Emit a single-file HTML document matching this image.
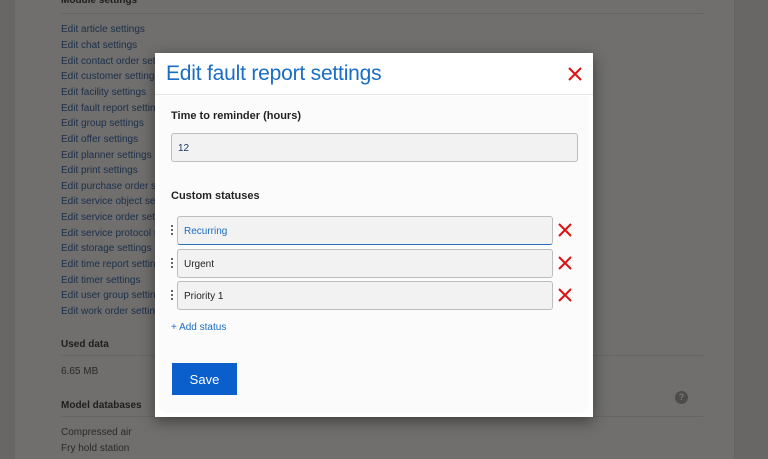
<!DOCTYPE html>
<html><head><style>
*{margin:0;padding:0;box-sizing:border-box}
body{width:768px;height:459px;overflow:hidden;background:#686766;font-family:"Liberation Sans",sans-serif;position:relative}
.panel{position:absolute;left:14px;top:0;width:721px;height:459px;background:#706f6d;border-left:1px solid #666;border-right:1px solid #636262}
.t{position:absolute;font-size:10px;color:#1b2f4a;white-space:nowrap}
.h{position:absolute;font-size:10px;font-weight:bold;color:#1e1e1e;white-space:nowrap}
.d{position:absolute;font-size:10px;color:#2a2a2a;white-space:nowrap}
.ln{position:absolute;left:61px;width:642px;height:1px;background:#666564}
.modal{position:absolute;left:155px;top:53px;width:438px;height:364px;background:#fff;box-shadow:0 4px 14px rgba(0,0,0,.45)}
.mh{height:42px;border-bottom:1px solid #e6e6e6;position:relative}
.mh h1{position:absolute;left:11px;top:9px;font-weight:normal;font-size:21px;color:#1a6dc4;letter-spacing:-0.2px}
.mb{position:absolute;left:4px;top:43px;width:430px;height:317px;background:#fbfbfb;border-radius:0 0 8px 8px}
.lbl{position:absolute;font-size:11px;font-weight:bold;color:#222}
.inp{position:absolute;background:#f2f2f2;border:1px solid #bdbdbd;border-radius:3px;font-size:10px;color:#222;padding-left:6px;padding-top:2px;display:flex;align-items:center}
.x{position:absolute;width:16px;height:16px}
.dots{position:absolute;left:171px;width:3px;font-size:0}
.dots i{display:block;width:2px;height:2px;background:#333;margin-bottom:2px;border-radius:1px}
</style></head><body>
<div class="panel"></div>
<div class="h" style="left:61px;top:-5px">Module settings</div>
<div class="ln" style="top:13px"></div>
<div class="t" style="left:61px;top:24px">Edit article settings</div>
<div class="t" style="left:61px;top:40px">Edit chat settings</div>
<div class="t" style="left:61px;top:56px">Edit contact order settings</div>
<div class="t" style="left:61px;top:71px">Edit customer settings</div>
<div class="t" style="left:61px;top:87px">Edit facility settings</div>
<div class="t" style="left:61px;top:103px">Edit fault report settings</div>
<div class="t" style="left:61px;top:118px">Edit group settings</div>
<div class="t" style="left:61px;top:134px">Edit offer settings</div>
<div class="t" style="left:61px;top:150px">Edit planner settings</div>
<div class="t" style="left:61px;top:165px">Edit print settings</div>
<div class="t" style="left:61px;top:181px">Edit purchase order settings</div>
<div class="t" style="left:61px;top:196px">Edit service object settings</div>
<div class="t" style="left:61px;top:212px">Edit service order settings</div>
<div class="t" style="left:61px;top:228px">Edit service protocol settings</div>
<div class="t" style="left:61px;top:243px">Edit storage settings</div>
<div class="t" style="left:61px;top:259px">Edit time report settings</div>
<div class="t" style="left:61px;top:275px">Edit timer settings</div>
<div class="t" style="left:61px;top:290px">Edit user group settings</div>
<div class="t" style="left:61px;top:306px">Edit work order settings</div>
<div class="h" style="left:61px;top:339px">Used data</div>
<div class="ln" style="top:355px"></div>
<div class="d" style="left:61px;top:366px">6.65 MB</div>
<div class="h" style="left:61px;top:400px">Model databases</div>
<div class="ln" style="top:416px"></div>
<div class="d" style="left:61px;top:427px">Compressed air</div>
<div class="d" style="left:61px;top:443px">Fry hold station</div>
<div style="position:absolute;left:675px;top:391px;width:13px;height:13px;border-radius:50%;background:#4d4c4b;color:#777;font-size:9px;font-weight:bold;text-align:center;line-height:13px">?</div>

<div class="modal">
<div class="mh"><h1>Edit fault report settings</h1>
<svg class="x" style="left:412px;top:13px" viewBox="0 0 16 16"><path d="M2 2L14 14M14 2L2 14" stroke="#e01010" stroke-width="2"/></svg></div>
<div class="mb"></div>
</div>
<div class="lbl" style="left:171px;top:110px">Time to reminder (hours)</div>
<div class="inp" style="left:171px;top:133px;width:407px;height:29px;color:#1b3a66">12</div>
<div class="lbl" style="left:171px;top:190px">Custom statuses</div>
<div class="dots" style="top:225px"><i></i><i></i><i></i></div>
<div class="inp" style="left:177px;top:216px;width:376px;height:29px;color:#1a6dc4;border-bottom:1px solid #2a6fb8">Recurring</div>
<svg class="x" style="left:557px;top:222px" viewBox="0 0 16 16"><path d="M2 2L14 14M14 2L2 14" stroke="#e01010" stroke-width="2"/></svg>
<div class="dots" style="top:258px"><i></i><i></i><i></i></div>
<div class="inp" style="left:177px;top:249px;width:376px;height:29px">Urgent</div>
<svg class="x" style="left:557px;top:255px" viewBox="0 0 16 16"><path d="M2 2L14 14M14 2L2 14" stroke="#e01010" stroke-width="2"/></svg>
<div class="dots" style="top:290px"><i></i><i></i><i></i></div>
<div class="inp" style="left:177px;top:281px;width:376px;height:29px">Priority 1</div>
<svg class="x" style="left:557px;top:287px" viewBox="0 0 16 16"><path d="M2 2L14 14M14 2L2 14" stroke="#e01010" stroke-width="2"/></svg>
<div style="position:absolute;left:171px;top:322px;font-size:10px;color:#1a6dc4">+ Add status</div>
<div style="position:absolute;left:172px;top:363px;width:65px;height:32px;background:#0a5fcc;color:#fff;font-size:13px;text-align:center;line-height:34px">Save</div>
</body></html>
